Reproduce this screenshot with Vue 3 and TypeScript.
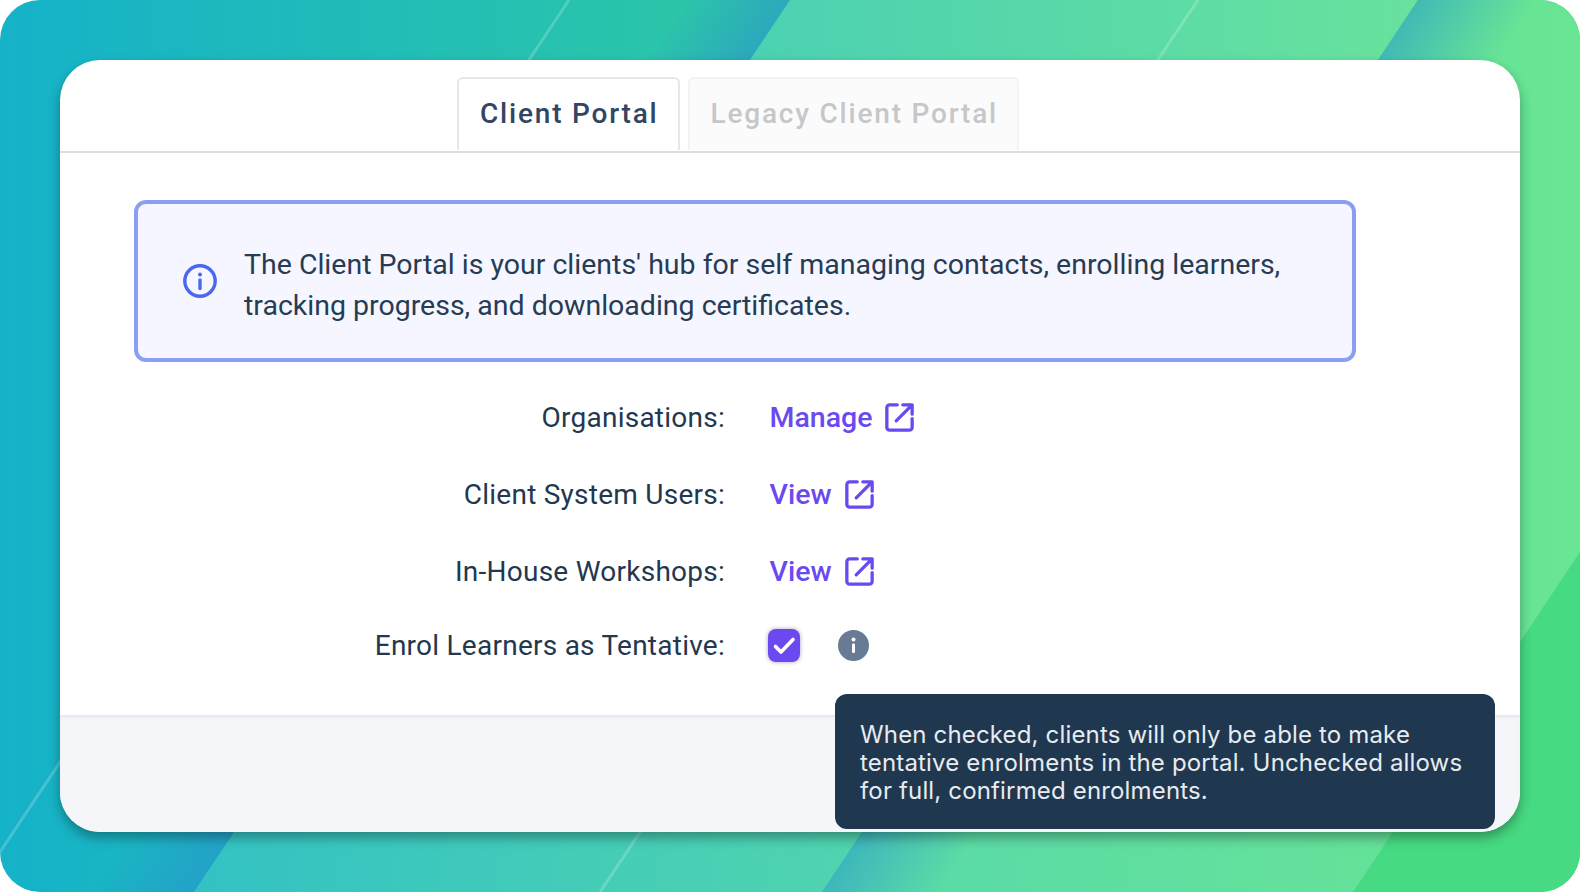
<script setup lang="ts">
const links = [
  { label: 'Organisations:', action: 'Manage' },
  { label: 'Client System Users:', action: 'View' },
  { label: 'In-House Workshops:', action: 'View' },
]
</script>

<template>
  <div class="page">
    <svg class="backdrop" viewBox="0 0 1580 892" aria-hidden="true">
      <defs>
        <linearGradient id="bgA" gradientUnits="userSpaceOnUse" x1="0" y1="0" x2="790" y2="0">
          <stop offset="0" stop-color="#15b2c9" />
          <stop offset="1" stop-color="#2fc8a4" />
        </linearGradient>
        <linearGradient id="bgB" gradientUnits="userSpaceOnUse" x1="190" y1="0" x2="1420" y2="0">
          <stop offset="0" stop-color="#33c2c4" />
          <stop offset="1" stop-color="#68e29d" />
        </linearGradient>
        <linearGradient id="bgC" gradientUnits="userSpaceOnUse" x1="820" y1="0" x2="1580" y2="0">
          <stop offset="0" stop-color="#58d9aa" />
          <stop offset="1" stop-color="#69e593" />
        </linearGradient>
        <linearGradient id="edgeA" gradientUnits="userSpaceOnUse" x1="790" y1="0" x2="715" y2="-50">
          <stop offset="0" stop-color="#2a8fd0" stop-opacity=".55" />
          <stop offset="1" stop-color="#2a8fd0" stop-opacity="0" />
        </linearGradient>
        <linearGradient id="edgeC" gradientUnits="userSpaceOnUse" x1="1418" y1="0" x2="1500" y2="55">
          <stop offset="0" stop-color="#2a9fc8" stop-opacity=".6" />
          <stop offset="1" stop-color="#2a9fc8" stop-opacity="0" />
        </linearGradient>
      </defs>
      <rect width="1580" height="892" fill="url(#bgA)" />
      <polygon points="690,0 790,0 194,892 94,892" fill="url(#edgeA)" />
      <polygon points="790,0 1418,0 822,892 194,892" fill="url(#bgB)" />
      <polygon points="1418,0 1580,0 1580,892 822,892" fill="url(#bgC)" />
      <polygon points="1418,0 1540,0 944,892 822,892" fill="url(#edgeC)" />
      <polygon points="1580,552 1580,892 1353,892" fill="#46da82" />
      <line x1="569" y1="0" x2="-2" y2="855" class="streak" />
      <line x1="1198" y1="0" x2="600" y2="892" class="streak" />
    </svg>

    <main class="card">
      <nav class="tabs">
        <button class="tab tab-active" type="button">Client Portal</button>
        <button class="tab tab-muted" type="button">Legacy Client Portal</button>
      </nav>

      <section class="body">
        <div class="alert">
          <svg class="alert-icon" viewBox="0 0 34 34" fill="none" aria-hidden="true">
            <circle cx="17" cy="17" r="15.2" stroke="currentColor" stroke-width="3.4" />
            <circle cx="17" cy="10.6" r="2" fill="currentColor" />
            <path d="M17 16v8.6" stroke="currentColor" stroke-width="3.4" stroke-linecap="round" />
          </svg>
          <p class="alert-text">
            The Client Portal is your clients' hub for self managing contacts, enrolling learners,
            tracking progress, and downloading certificates.
          </p>
        </div>

        <div v-for="link in links" :key="link.label" class="row">
          <span class="label">{{ link.label }}</span>
          <a class="link" href="#" @click.prevent>
            {{ link.action }}
            <svg class="ext" viewBox="0 0 30 30" fill="none" aria-hidden="true">
              <path
                d="M13 3.5H6A2.5 2.5 0 0 0 3.5 6v18A2.500 2.500 0 0 0 6 26.500h18a2.500 2.500 0 0 0 2.500-2.500v-8"
                stroke="currentColor" stroke-width="3" stroke-linecap="round" stroke-linejoin="round"
              />
              <path d="M12 18 26 4M18 3.500h8.500V12" stroke="currentColor" stroke-width="3" stroke-linecap="round" stroke-linejoin="round" />
            </svg>
          </a>
        </div>

        <div class="row row-last">
          <span class="label">Enrol Learners as Tentative:</span>
          <span class="check">
            <svg viewBox="0 0 32 33" fill="none" aria-hidden="true">
              <path d="M7.500 17.500 13 23 25 10.500" stroke="#fff" stroke-width="3.600" stroke-linecap="round" stroke-linejoin="round" />
            </svg>
          </span>
          <svg class="hint" viewBox="0 0 31 31" aria-hidden="true">
            <circle cx="15.500" cy="15.500" r="15.500" fill="#687b95" />
            <circle cx="15.500" cy="9.500" r="2" fill="#fff" />
            <rect x="14" y="13.500" width="3" height="9.500" rx="1.200" fill="#fff" />
          </svg>
        </div>
      </section>

      <footer class="footer"></footer>

      <div class="tooltip" role="tooltip">
        When checked, clients will only be able to make tentative enrolments in the portal. Unchecked allows for full, confirmed enrolments.
      </div>
    </main>
  </div>
</template>

<style>
html,
body {
  margin: 0;
  background: #fff;
}
</style>

<style scoped>
.page {
  position: relative;
  box-sizing: border-box;
  width: 1580px;
  height: 892px;
  padding: 60px;
  overflow: hidden;
  border-radius: 40px;
  font-family: Roboto, "Liberation Sans", sans-serif;
  color: #23384f;
}

.backdrop {
  position: absolute;
  inset: 0;
  width: 100%;
  height: 100%;
}

.card {
  position: relative;
  display: flex;
  flex-direction: column;
  width: 1460px;
  height: 772px;
  border-radius: 40px;
  background: #fff;
  box-shadow: 0 6px 12px rgba(0, 0, 0, 0.32);
}

.tabs {
  flex: none;
  display: flex;
  align-items: flex-end;
  gap: 8px;
  box-sizing: border-box;
  height: 93px;
  padding-left: 397px;
  border-bottom: 2px solid #dcdde0;
}

.tab {
  box-sizing: border-box;
  height: 73px;
  margin-bottom: 1px;
  padding: 0 19px 2px 21px;
  border: 2px solid #e6e7ec;
  border-bottom: 0;
  border-radius: 6px 6px 0 0;
  background: #fff;
  font: 500 28px Roboto, sans-serif;
  letter-spacing: 1.8px;
  color: #324563;
}

.tab-muted {
  border-color: #f2f2f4;
  background: #fbfbfc;
  color: #c6c7c9;
}

.body {
  flex: 1;
  min-height: 0;
  padding: 47px 0 0 74px;
}

.alert {
  display: flex;
  align-items: center;
  gap: 27px;
  box-sizing: border-box;
  width: 1222px;
  height: 162px;
  padding: 0 40px 0 45px;
  border: 4px solid #8a9ff1;
  border-radius: 12px;
  background: #f5f6ff;
}

.alert-icon {
  flex: none;
  width: 34px;
  height: 34px;
  color: #4a68ee;
}

.alert-text {
  margin: 0;
  padding-top: 7px;
  font-size: 28.5px;
  line-height: 41px;
  color: #273c53;
}

.row {
  display: flex;
  align-items: center;
  height: 77px;
}

.alert + .row {
  margin-top: 16.5px;
}

.row-last {
  height: 71px;
}

.label {
  flex: none;
  width: 591px;
  font-size: 28px;
  text-align: right;
  letter-spacing: 0.25px;
}

.link {
  display: flex;
  align-items: center;
  gap: 11px;
  margin-left: 44.5px;
  font-size: 28.5px;
  font-weight: 500;
  color: #6a4af0;
  text-decoration: none;
}

.ext {
  width: 33px;
  height: 33px;
}

.check {
  flex: none;
  width: 32px;
  height: 33px;
  margin-left: 43px;
  border-radius: 8px;
  background: #6b48f0;
  box-shadow: 0 0 4px rgba(60, 50, 120, 0.45);
}

.check svg {
  display: block;
  width: 100%;
  height: 100%;
}

.hint {
  width: 31px;
  height: 31px;
  margin-left: 38px;
}

.footer {
  flex: none;
  height: 117px;
  border-radius: 0 0 40px 40px;
  background: #f5f6f9;
  box-shadow: inset 0 3px 3px -1px #e4e5ee;
}

.tooltip {
  position: absolute;
  left: 775px;
  top: 634px;
  box-sizing: border-box;
  width: 660px;
  height: 135px;
  padding: 27px 24px 0 25px;
  border-radius: 12px;
  background: #20384f;
  box-shadow: 0 0 0 1px rgba(255, 255, 255, 0.35);
  font-family: Inter, sans-serif;
  font-size: 24px;
  line-height: 28px;
  letter-spacing: 0.16px;
  color: #e8ebef;
}

.streak {
  stroke: rgba(255, 255, 255, 0.2);
  stroke-width: 3;
}
</style>
